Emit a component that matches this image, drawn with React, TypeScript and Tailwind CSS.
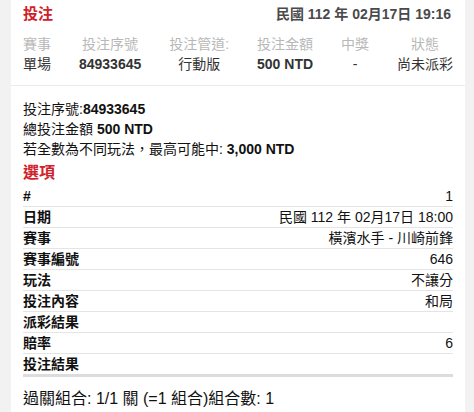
import React from 'react';

const summary = [
  { label: '賽事', value: '單場', bold: false },
  { label: '投注序號', value: '84933645', bold: true },
  { label: '投注管道:', value: '行動版', bold: false },
  { label: '投注金額', value: '500 NTD', bold: true },
  { label: '中獎', value: '-', bold: false },
  { label: '狀態', value: '尚未派彩', bold: false },
];

const rows = [
  { label: '#', value: '1' },
  { label: '日期', value: '民國 112 年 02月17日 18:00' },
  { label: '賽事', value: '橫濱水手 - 川崎前鋒' },
  { label: '賽事編號', value: '646' },
  { label: '玩法', value: '不讓分' },
  { label: '投注內容', value: '和局' },
  { label: '派彩結果', value: '' },
  { label: '賠率', value: '6' },
  { label: '投注結果', value: '' },
];

export default function App() {
  return (
    <div
      className="w-[474px] h-[412px] overflow-hidden bg-[#f2f2f2] pl-[11px] pr-[9px]"
      style={{ fontFamily: '"Liberation Sans", "Noto Sans CJK TC", sans-serif' }}
    >
      <div className="bg-white h-full">
        {/* header card */}
        <div className="px-3 pt-[4px] pb-[10px] border-b border-[#ececec]">
          <div className="flex items-center justify-between h-[20px] pr-[2px]">
            <span className="text-[15px] font-bold text-[#d0202a]">投注</span>
            <span className="text-[14px] font-semibold text-[#4a4a4a]">民國 112 年 02月17日 19:16</span>
          </div>
          <div className="flex justify-between mt-[10px]">
            {summary.map((s) => (
              <div key={s.label} className="flex flex-col items-center">
                <span className="text-[14px] leading-[20px] text-[#b8b8b8]">{s.label}</span>
                <span
                  className={`text-[14px] leading-[21px] text-[#333] ${s.bold ? 'font-bold' : ''}`}
                >
                  {s.value}
                </span>
              </div>
            ))}
          </div>
        </div>

        {/* detail */}
        <div className="px-3 pt-[13px] text-[#111]">
          <div className="text-[14px] leading-[20px]">
            投注序號:<span className="font-bold">84933645</span>
          </div>
          <div className="text-[14px] leading-[20px]">
            總投注金額 <span className="font-bold">500 NTD</span>
          </div>
          <div className="text-[14px] leading-[20px]">
            若全數為不同玩法，最高可能中: <span className="font-bold">3,000 NTD</span>
          </div>
          <div className="text-[16px] leading-[24px] font-bold text-[#d0202a] mt-[2px]">選項</div>
          <div className="mt-[1px]">
            {rows.map((r, i) => (
              <div
                key={r.label}
                className={`flex items-center justify-between text-[14px] ${
                  i === rows.length - 1
                    ? 'h-[23px] border-b-[3px] border-[#dcdcdc]'
                    : 'h-[21px] border-b border-[#e4e4e4]'
                }`}
              >
                <span className="font-bold">{r.label}</span>
                <span>{r.value}</span>
              </div>
            ))}
          </div>
          <div className="text-[16px] leading-[22px] mt-[11px]">過關組合: 1/1 關 (=1 組合)組合數: 1</div>
        </div>
      </div>
    </div>
  );
}
